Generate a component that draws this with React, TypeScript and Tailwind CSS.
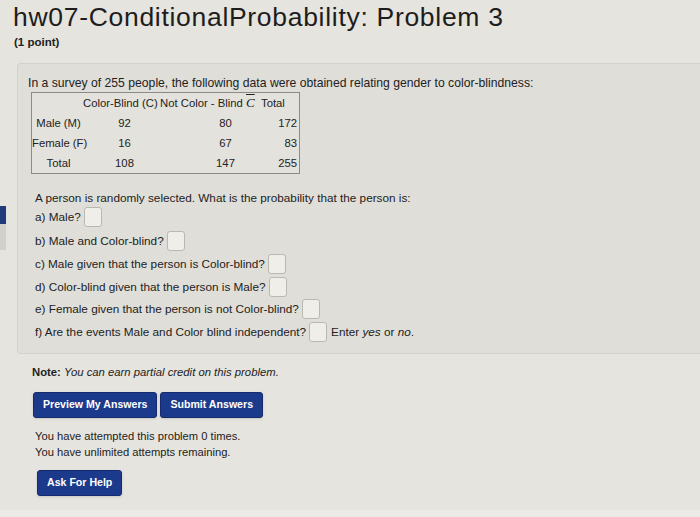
import React from 'react';

const rows = [
  { label: 'Male (M)', a: '92', b: '80', t: '172' },
  { label: 'Female (F)', a: '16', b: '67', t: '83' },
  { label: 'Total', a: '108', b: '147', t: '255' },
];

const questions = [
  { q: 'a) Male?', mt: 'mt-0' },
  { q: 'b) Male and Color-blind?', mt: 'mt-[4px]' },
  { q: 'c) Male given that the person is Color-blind?', mt: 'mt-[3px]' },
  { q: 'd) Color-blind given that the person is Male?', mt: 'mt-[3px]' },
  { q: 'e) Female given that the person is not Color-blind?', mt: 'mt-[2px]' },
];

function AnswerBox() {
  return <span className="inline-block w-[18px] h-[20px] ml-[3px] rounded-[3px] border border-[#b9b8b3] bg-[#efeee9]" />;
}

function NavyButton({ children }: { children: React.ReactNode }) {
  return (
    <button className="h-[26px] px-[9px] rounded-[3px] bg-[#1c3a8b] border border-[#142c6e] text-white text-[10.6px] font-bold shadow-sm whitespace-nowrap">
      {children}
    </button>
  );
}

export default function App() {
  return (
    <div className="w-[700px] h-[517px] overflow-hidden flex flex-col bg-[#e6e4de] text-[#222] font-['Liberation_Sans',Arial,sans-serif]">
      <div className="pl-[13px] pt-[2px]">
        <h1 className="text-[26.5px] leading-[31px] text-[#1d1d1d] tracking-[0.7px] whitespace-nowrap">hw07-ConditionalProbability: Problem 3</h1>
        <div className="text-[11.5px] leading-[14px] font-bold mt-[2px] pl-[1px]">(1 point)</div>
      </div>

      <div className="flex mt-[14px]">
        <div className="w-[6px] flex flex-col pt-[143px]">
          <div className="h-[18px] bg-[#1f3a7d]" />
          <div className="h-[26px] bg-[#d2d0ca]" />
        </div>
        <div className="flex-1 ml-[11px] bg-[#e0ded8] border border-[#d3d1cb] border-r-0 rounded-l-[4px] pl-[10px] pt-[11px] pb-[11px]">
          <p className="text-[12.2px] leading-[16px] whitespace-nowrap">
            In a survey of 255 people, the following data were obtained relating gender to color-blindness:
          </p>
          <div className="mt-[1px] ml-[3px] w-[269px] border border-[#8c8b87] bg-[#e4e2dc] text-[11.3px] whitespace-nowrap">
            <div className="flex h-[20px] items-center">
              <div className="w-[51px]" />
              <div className="w-[74px]">Color-Blind (C)</div>
              <div className="w-[103px] flex items-center pl-[3px]">
                Not Color - Blind&nbsp;
                <span className="font-['Liberation_Serif',serif] italic overline text-[13px]">C</span>
              </div>
              <div className="w-[39px] pl-[1px]">Total</div>
            </div>
            {rows.map((r) => (
              <div key={r.label} className="flex h-[20px] items-center">
                <div className="w-[53px] text-center">{r.label}</div>
                <div className="w-[73px] text-center pl-[6px]">{r.a}</div>
                <div className="w-[103px] text-center pl-[32px]">{r.b}</div>
                <div className="w-[38px] text-right pr-[2px]">{r.t}</div>
              </div>
            ))}
          </div>

          <div className="mt-[16px] pl-[7px] text-[11.75px] whitespace-nowrap">
            <p className="leading-[16px] mb-[1px]">A person is randomly selected. What is the probability that the person is:</p>
            {questions.map((q) => (
              <div key={q.q} className={`flex items-center h-[20px] ${q.mt}`}>
                <span>{q.q}</span>
                <AnswerBox />
              </div>
            ))}
            <div className="flex items-center h-[20px] mt-[3px]">
              <span>f) Are the events Male and Color blind independent?</span>
              <AnswerBox />
              <span className="ml-[4px]">
                Enter <i>yes</i> or <i>no</i>.
              </span>
            </div>
          </div>
        </div>
      </div>

      <div className="pl-[32px] pt-[10px]">
        <p className="text-[11.3px] leading-[16px]">
          <b>Note:</b> <i>You can earn partial credit on this problem.</i>
        </p>
        <div className="flex gap-[3px] mt-[12px] pl-[1px]">
          <NavyButton>Preview My Answers</NavyButton>
          <NavyButton>Submit Answers</NavyButton>
        </div>
        <div className="mt-[10px] pl-[3px] text-[11.2px] leading-[16px]">
          <p>You have attempted this problem 0 times.</p>
          <p>You have unlimited attempts remaining.</p>
        </div>
        <div className="mt-[9px] pl-[5px]">
          <NavyButton>Ask For Help</NavyButton>
        </div>
      </div>
      <div className="flex-1" />
      <div className="h-[7px] bg-[#eceae6]" />
    </div>
  );
}
